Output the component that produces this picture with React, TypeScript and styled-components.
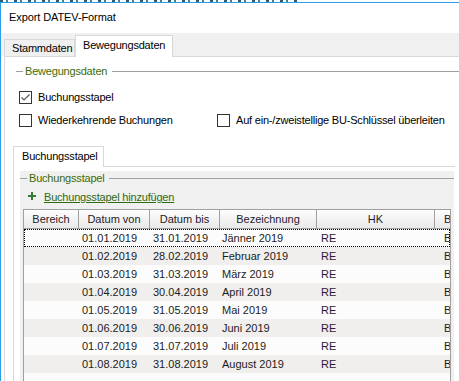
import React from "react";
import styled, { createGlobalStyle } from "styled-components";

const GlobalStyle = createGlobalStyle`
  html, body {
    margin: 0;
    padding: 0;
    background: #ffffff;
  }
  body {
    font-family: "Liberation Sans", Arial, sans-serif;
    font-size: 11px;
    color: #000000;
  }
`;

const Screen = styled.div`
  width: 459px;
  height: 381px;
  overflow: hidden;
  background: #ffffff;
  display: flex;
  flex-direction: column;
`;

// bits of the window lying behind the dialog
const Backdrop = styled.div`
  height: 2px;
  width: 300px;
  flex: none;
  background: repeating-linear-gradient(
    90deg,
    #2f5d6e 0 3px,
    transparent 3px 6px,
    #4a7f91 6px 8px,
    transparent 8px 14px
  );
`;

const Window = styled.div`
  flex: 1;
  display: flex;
  flex-direction: column;
  border-left: 1px solid #2a9fe6;
  border-top: 1px solid #2a9fe6;
  background: #ffffff;
  min-height: 0;
`;

const TitleBar = styled.div`
  height: 30px;
  flex: none;
  display: flex;
  align-items: center;
  padding: 0 0 2px 8px;
  box-sizing: border-box;
  letter-spacing: -0.1px;
  color: #000000;
`;

const TabStrip = styled.div`
  height: 23px;
  flex: none;
  display: flex;
  align-items: flex-end;
  padding-left: 3px;
  background: #f0f0f0;
`;

const Tab = styled.div<{ $active?: boolean; $width: number }>`
  position: relative;
  z-index: 1;
  box-sizing: border-box;
  width: ${p => p.$width}px;
  height: ${p => (p.$active ? 22 : 17)}px;
  margin-bottom: ${p => (p.$active ? -1 : 0)}px;
  padding: ${p => (p.$active ? "3px 0 0 7px" : "2px 0 0 7px")};
  border: 1px solid #d9d9d9;
  border-bottom: none;
  background: ${p => (p.$active ? "#ffffff" : "#f0f0f0")};
  letter-spacing: -0.2px;
  line-height: 13px;
  white-space: nowrap;
`;

const Panel = styled.div`
  flex: 1;
  margin-left: 3px;
  border-top: 1px solid #d9d9d9;
  border-left: 1px solid #d9d9d9;
  background: #ffffff;
  display: flex;
  flex-direction: column;
  min-height: 0;
`;

const GroupHeader = styled.div<{ $top: number; $lead: number }>`
  display: flex;
  align-items: center;
  height: 14px;
  flex: none;
  margin-top: ${p => p.$top}px;
  padding-left: ${p => p.$lead}px;
`;

const GroupLine = styled.div<{ $width?: number }>`
  height: 1px;
  background: #a0a0a0;
  ${p => (p.$width ? `width: ${p.$width}px;` : "flex: 1;")}
`;

const GroupTitle = styled.span`
  color: #3b6b06;
  letter-spacing: -0.2px;
  margin: 0 5px 0 2px;
  white-space: nowrap;
`;

const CheckRow = styled.div<{ $top: number }>`
  display: flex;
  height: 13px;
  flex: none;
  margin-top: ${p => p.$top}px;
  padding-left: 14px;
`;

const CheckItem = styled.label<{ $width?: number }>`
  display: flex;
  align-items: center;
  gap: 6px;
  ${p => (p.$width ? `width: ${p.$width}px;` : "")}
  letter-spacing: -0.2px;
  white-space: nowrap;
  line-height: 13px;
`;

const Box = styled.span`
  width: 13px;
  height: 13px;
  box-sizing: border-box;
  border: 1px solid #333333;
  background: #ffffff;
  display: flex;
  flex: none;
`;

const InnerTabs = styled.div`
  margin: 19px 0 0 8px;
  width: 442px;
  flex: 1;
  display: flex;
  flex-direction: column;
  min-height: 0;
`;

const InnerTabRow = styled.div`
  display: flex;
  flex: none;
`;

const InnerTab = styled.div`
  position: relative;
  z-index: 1;
  box-sizing: border-box;
  width: 91px;
  height: 21px;
  margin-bottom: -1px;
  padding: 3px 0 0 8px;
  border: 1px solid #d9d9d9;
  border-bottom: none;
  background: #ffffff;
  letter-spacing: -0.2px;
  line-height: 13px;
`;

const InnerPanel = styled.div`
  flex: 1;
  border-top: 1px solid #d9d9d9;
  border-left: 1px solid #d9d9d9;
  padding: 4px 1px 0 6px;
  background: #ffffff;
  display: flex;
  flex-direction: column;
  min-height: 0;
`;

const GroupBox = styled.div`
  flex: 1;
  background: #f0f0f0;
  display: flex;
  flex-direction: column;
  min-height: 0;
`;

const LinkRow = styled.div`
  display: flex;
  align-items: center;
  gap: 8px;
  height: 16px;
  flex: none;
  margin-top: 3px;
  padding-left: 8px;
`;

const AddLink = styled.a`
  color: #2f6a12;
  text-decoration: underline;
  letter-spacing: -0.2px;
  margin-top: 2px;
  cursor: pointer;
`;

const Grid = styled.div`
  margin: 5px 0 0 3px;
  width: 428px;
  flex: 1;
  box-sizing: border-box;
  border: 1px solid #a0a0a0;
  border-bottom: none;
  background: #fbfbfb;
  overflow: hidden;
`;

const columns = "55px 71px 70px 97px 118px 60px";

const HeaderRow = styled.div`
  display: grid;
  grid-template-columns: ${columns};
  height: 19px;
  box-sizing: border-box;
  border-bottom: 1px solid #a0a0a0;
  background: linear-gradient(#fdfdfd, #e9e9e9);
`;

const HeaderCell = styled.div<{ $left?: boolean }>`
  border-right: 1px solid #a0a0a0;
  line-height: 18px;
  text-align: ${p => (p.$left ? "left" : "center")};
  padding-left: ${p => (p.$left ? 9 : 0)}px;
  color: #261a2c;
  white-space: nowrap;
  overflow: hidden;
`;

const Row = styled.div<{ $alt: boolean; $focused?: boolean }>`
  display: grid;
  grid-template-columns: ${columns};
  height: 18px;
  line-height: 18px;
  background: ${p => (p.$alt ? "#f0efed" : "#fcfcfc")};
  ${p => (p.$focused ? "outline: 1px dotted #000000; outline-offset: -1px;" : "")}
`;

const Cell = styled.div<{ $pad: number; $tone?: string }>`
  padding-left: ${p => p.$pad}px;
  color: ${p => p.$tone || "#1c1c1c"};
  white-space: nowrap;
  overflow: hidden;
`;

const Check = () => (
  <svg width="11" height="11" viewBox="0 0 11 11">
    <polyline points="1.5,5.5 4,8 9.5,2.5" fill="none" stroke="#5a5a5a" strokeWidth="1.2" />
  </svg>
);

const Plus = () => (
  <svg width="8" height="8" viewBox="0 0 8 8">
    <rect x="3" y="0" width="2" height="8" fill="#357a35" />
    <rect x="0" y="3" width="8" height="2" fill="#357a35" />
  </svg>
);

const months = ["Jänner", "Februar", "März", "April", "Mai", "Juni", "Juli", "August"];
const lastDay = ["31", "28", "31", "30", "31", "30", "31", "31"];

const rows = months.map((m, i) => {
  const mm = String(i + 1).padStart(2, "0");
  return {
    from: `01.${mm}.2019`,
    to: `${lastDay[i]}.${mm}.2019`,
    name: `${m} 2019`,
  };
});

export default function App() {
  return (
    <Screen>
      <GlobalStyle />
      <Backdrop />
      <Window>
        <TitleBar>Export DATEV-Format</TitleBar>
        <TabStrip>
          <Tab $width={71}>Stammdaten</Tab>
          <Tab $width={98} $active>
            Bewegungsdaten
          </Tab>
        </TabStrip>
        <Panel>
          <GroupHeader $top={7} $lead={11}>
            <GroupLine $width={7} />
            <GroupTitle>Bewegungsdaten</GroupTitle>
            <GroupLine />
          </GroupHeader>
          <CheckRow $top={13}>
            <CheckItem>
              <Box>
                <Check />
              </Box>
              Buchungsstapel
            </CheckItem>
          </CheckRow>
          <CheckRow $top={10}>
            <CheckItem $width={198}>
              <Box />
              Wiederkehrende Buchungen
            </CheckItem>
            <CheckItem>
              <Box />
              Auf ein-/zweistellige BU-Schlüssel überleiten
            </CheckItem>
          </CheckRow>
          <InnerTabs>
            <InnerTabRow>
              <InnerTab>Buchungsstapel</InnerTab>
            </InnerTabRow>
            <InnerPanel>
              <GroupBox>
                <GroupHeader $top={0} $lead={0}>
                  <GroupLine $width={7} />
                  <GroupTitle>Buchungsstapel</GroupTitle>
                  <GroupLine />
                </GroupHeader>
                <LinkRow>
                  <Plus />
                  <AddLink>Buchungsstapel hinzufügen</AddLink>
                </LinkRow>
                <Grid>
                  <HeaderRow>
                    <HeaderCell>Bereich</HeaderCell>
                    <HeaderCell>Datum von</HeaderCell>
                    <HeaderCell>Datum bis</HeaderCell>
                    <HeaderCell>Bezeichnung</HeaderCell>
                    <HeaderCell>HK</HeaderCell>
                    <HeaderCell $left>B</HeaderCell>
                  </HeaderRow>
                  {rows.map((r, i) => (
                    <Row key={r.from} $alt={i % 2 === 1} $focused={i === 0}>
                      <Cell $pad={3} />
                      <Cell $pad={3}>{r.from}</Cell>
                      <Cell $pad={3}>{r.to}</Cell>
                      <Cell $pad={2}>{r.name}</Cell>
                      <Cell $pad={4} $tone="#2e1638">
                        RE
                      </Cell>
                      <Cell $pad={9}>B</Cell>
                    </Row>
                  ))}
                </Grid>
              </GroupBox>
            </InnerPanel>
          </InnerTabs>
        </Panel>
      </Window>
    </Screen>
  );
}
